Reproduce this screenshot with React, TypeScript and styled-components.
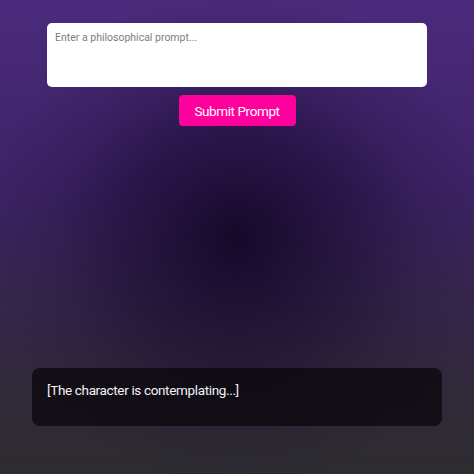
import styled, { createGlobalStyle } from "styled-components";

const GlobalStyle = createGlobalStyle`
  html, body {
    margin: 0;
    padding: 0;
    height: 100%;
  }
  body {
    font-family: Roboto, "Liberation Sans", Arial, sans-serif;
  }
  #root {
    height: 100%;
  }
`;

const Scene = styled.div`
  width: 100%;
  min-height: 100vh;
  box-sizing: border-box;
  display: flex;
  flex-direction: column;
  align-items: center;
  padding: 23px 32px 48px;
  background:
    radial-gradient(circle at 50% 50%, rgba(14, 2, 30, 0.8) 0%, rgba(20, 6, 40, 0.5) 30%, rgba(20, 6, 40, 0.15) 55%, rgba(0, 0, 0, 0) 75%),
    linear-gradient(to bottom, #4b2a7c 0%, #3d2366 40%, #31283c 78%, #2d2c2f 100%);
`;

const PromptForm = styled.form`
  width: 380px;
  display: flex;
  flex-direction: column;
  align-items: center;
  gap: 8px;
`;

const PromptInput = styled.textarea`
  width: 100%;
  height: 64px;
  box-sizing: border-box;
  padding: 8px 8px;
  border: none;
  border-radius: 5px;
  background: #ffffff;
  font-family: Roboto, "Liberation Sans", Arial, sans-serif;
  font-size: 10.5px;
  color: #222;
  resize: none;
  outline: none;

  &::placeholder {
    color: #7d7d7d;
  }
`;

const SubmitButton = styled.button`
  width: 117px;
  height: 31px;
  border: none;
  border-radius: 4px;
  background: #ff009d;
  color: #ffffff;
  font-family: Roboto, "Liberation Sans", Arial, sans-serif;
  font-size: 13.5px;
  letter-spacing: -0.4px;
  cursor: pointer;
`;

const Spacer = styled.div`
  flex: 1;
`;

const DialogueBox = styled.div`
  width: 410px;
  height: 58px;
  box-sizing: border-box;
  padding: 14px 15px;
  border-radius: 8px;
  background: rgba(10, 8, 14, 0.78);
  color: #f2f2f2;
  font-size: 13.5px;
  letter-spacing: -0.35px;
  line-height: 17px;
`;

export default function App() {
  return (
    <>
      <GlobalStyle />
      <Scene>
        <PromptForm onSubmit={(e) => e.preventDefault()}>
          <PromptInput placeholder="Enter a philosophical prompt..." />
          <SubmitButton type="submit">Submit Prompt</SubmitButton>
        </PromptForm>
        <Spacer />
        <DialogueBox>[The character is contemplating...]</DialogueBox>
      </Scene>
    </>
  );
}
